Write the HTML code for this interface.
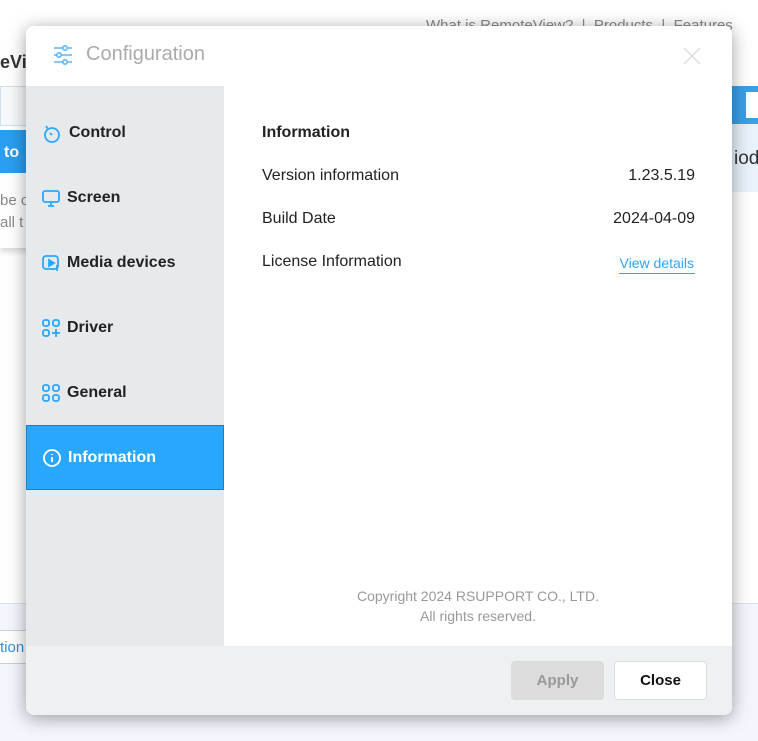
<!DOCTYPE html>
<html><head><style>
*{box-sizing:border-box;margin:0;padding:0}
body{width:758px;height:741px;overflow:hidden;position:relative;font-family:"Liberation Sans",Arial,sans-serif;background:#fff}
.bg2{position:absolute;left:0;top:603px;width:758px;height:138px;background:#f3f6fd;border-top:1px solid #dde3ea}
.nav{position:absolute;left:426px;top:17px;font-size:15px;color:#888;white-space:nowrap}
.modal{position:absolute;left:26px;top:26px;width:706px;height:689px;background:#fff;border-radius:8px;box-shadow:0 3px 18px rgba(0,0,0,.38);overflow:hidden}
.hdr{height:60px;position:relative}
.hdr .t{position:absolute;left:60px;top:17px;font-size:20px;color:#a9abae}
.side{position:absolute;left:0;top:60px;width:198px;height:560px;background:#e6eaed}
.item{position:absolute;left:0;width:198px;height:65px;font-size:16px;font-weight:bold;color:#222;display:flex;align-items:center;padding-left:15px}
.item svg{margin-right:6px}
.item.act{background:#29a7fd;color:#fff;border:1px solid #1a7fc5}
.main{position:absolute;left:198px;top:60px;right:0;height:560px}
.row{position:absolute;left:38px;right:37px;font-size:16px;color:#222;display:flex;justify-content:space-between}
.foot{position:absolute;left:0;top:620px;width:706px;height:69px;background:#eef1f2}
.btn{position:absolute;top:15px;width:93px;height:39px;border-radius:4px;font-size:15px;font-weight:bold;display:flex;align-items:center;justify-content:center}
</style></head><body>
<div class="nav">What is RemoteView? &nbsp;|&nbsp; Products &nbsp;|&nbsp; Features</div>
<div style="position:absolute;left:0;top:52px;font-size:18px;font-weight:bold;color:#333">eView</div>
<div style="position:absolute;left:0;top:86px;width:40px;height:40px;border:1px solid #cfe0f0;background:#f6f9fc"></div>
<div style="position:absolute;left:0;top:130px;width:40px;height:43px;background:#2a9ef0;color:#fff;font-weight:bold;font-size:16px;padding:14px 0 0 4px">to</div>
<div style="position:absolute;left:0;top:190px;font-size:15px;color:#888;line-height:22px">be c<br>all t</div>
<div style="position:absolute;left:0;top:236px;width:40px;height:12px;box-shadow:0 4px 6px rgba(0,0,0,.15)"></div>
<div style="position:absolute;left:732px;top:86px;width:26px;height:38px;background:#3aa0e8"></div>
<div style="position:absolute;left:746px;top:92px;width:12px;height:26px;background:#fff"></div>
<div style="position:absolute;left:732px;top:124px;width:26px;height:68px;background:#e8f2fb"></div>
<div style="position:absolute;left:734px;top:148px;font-size:19px;color:#333">iod</div>
<div class="bg2"></div>
<div style="position:absolute;left:0;top:630px;width:30px;height:34px;background:#fff;border:1px solid #ccd;border-left:none;font-size:15px;color:#3a8fd0;padding-top:8px">tion</div>
<div class="modal">
 <div class="hdr">
  <svg style="position:absolute;left:26px;top:18px" width="22" height="22" viewBox="0 0 22 22" fill="none" stroke="#5bb6f7" stroke-width="1.6"><path d="M2 4h18M2 11h18M2 18h18"/><circle cx="13" cy="4" r="2.2" fill="#fff"/><circle cx="7" cy="11" r="2.2" fill="#fff"/><circle cx="13" cy="18" r="2.2" fill="#fff"/></svg>
  <div class="t">Configuration</div>
  <svg style="position:absolute;left:657px;top:21px" width="18" height="18" viewBox="0 0 18 18" stroke="#ddd" stroke-width="1.5"><path d="M1 1l16 16M17 1L1 17"/></svg>
 </div>
 <div class="side">
  <div class="item" style="top:14px"><svg width="22" height="22" viewBox="0 0 22 22" fill="none" stroke="#29a7fd" stroke-width="1.8"><circle cx="11" cy="13" r="7"/><path d="M5 4l1.5 2.5M9 11l2 2"/></svg>Control</div>
  <div class="item" style="top:79px"><svg width="20" height="20" viewBox="0 0 20 20" fill="none" stroke="#29a7fd" stroke-width="1.8"><rect x="2" y="3" width="16" height="11" rx="2"/><path d="M7 18h6M10 14v4"/></svg>Screen</div>
  <div class="item" style="top:144px"><svg width="20" height="20" viewBox="0 0 20 20" fill="none" stroke="#29a7fd" stroke-width="1.8"><rect x="2" y="3" width="15" height="13" rx="3"/><path d="M8 7l5 3-5 3z" fill="#29a7fd"/><path d="M16 12v6"/></svg>Media devices</div>
  <div class="item" style="top:209px"><svg width="20" height="20" viewBox="0 0 20 20" fill="none" stroke="#29a7fd" stroke-width="1.8"><rect x="2" y="2" width="6" height="6" rx="2"/><rect x="12" y="2" width="6" height="6" rx="2"/><rect x="2" y="12" width="6" height="6" rx="2"/><path d="M15 11v8M11 15h8"/></svg>Driver</div>
  <div class="item" style="top:274px"><svg width="20" height="20" viewBox="0 0 20 20" fill="none" stroke="#29a7fd" stroke-width="1.8"><rect x="2" y="2" width="6" height="6" rx="2"/><rect x="12" y="2" width="6" height="6" rx="2"/><rect x="2" y="12" width="6" height="6" rx="2"/><rect x="12" y="12" width="6" height="6" rx="2"/></svg>General</div>
  <div class="item act" style="top:339px"><svg width="20" height="20" viewBox="0 0 20 20" fill="none" stroke="#fff" stroke-width="1.8"><circle cx="10" cy="10" r="8"/><path d="M10 9v5M10 6v1"/></svg>Information</div>
 </div>
 <div class="main">
  <div style="position:absolute;left:38px;top:38px;font-size:16px;font-weight:bold;color:#222">Information</div>
  <div class="row" style="top:81px"><span>Version information</span><span>1.23.5.19</span></div>
  <div class="row" style="top:124px"><span>Build Date</span><span>2024-04-09</span></div>
  <div class="row" style="top:167px"><span>License Information</span><span style="font-size:14px;color:#29a7fd;border-bottom:1px solid #29a7fd;padding:2px 1px 2px">View details</span></div>
  <div style="position:absolute;left:0;right:0;top:500px;text-align:center;font-size:14px;color:#999;line-height:20px">Copyright 2024 RSUPPORT CO., LTD.<br>All rights reserved.</div>
 </div>
 <div class="foot">
  <div class="btn" style="left:485px;background:#dcdcdc;color:#999">Apply</div>
  <div class="btn" style="left:588px;background:#fff;color:#111;border:1px solid #ddd">Close</div>
 </div>
</div>
</body></html>
